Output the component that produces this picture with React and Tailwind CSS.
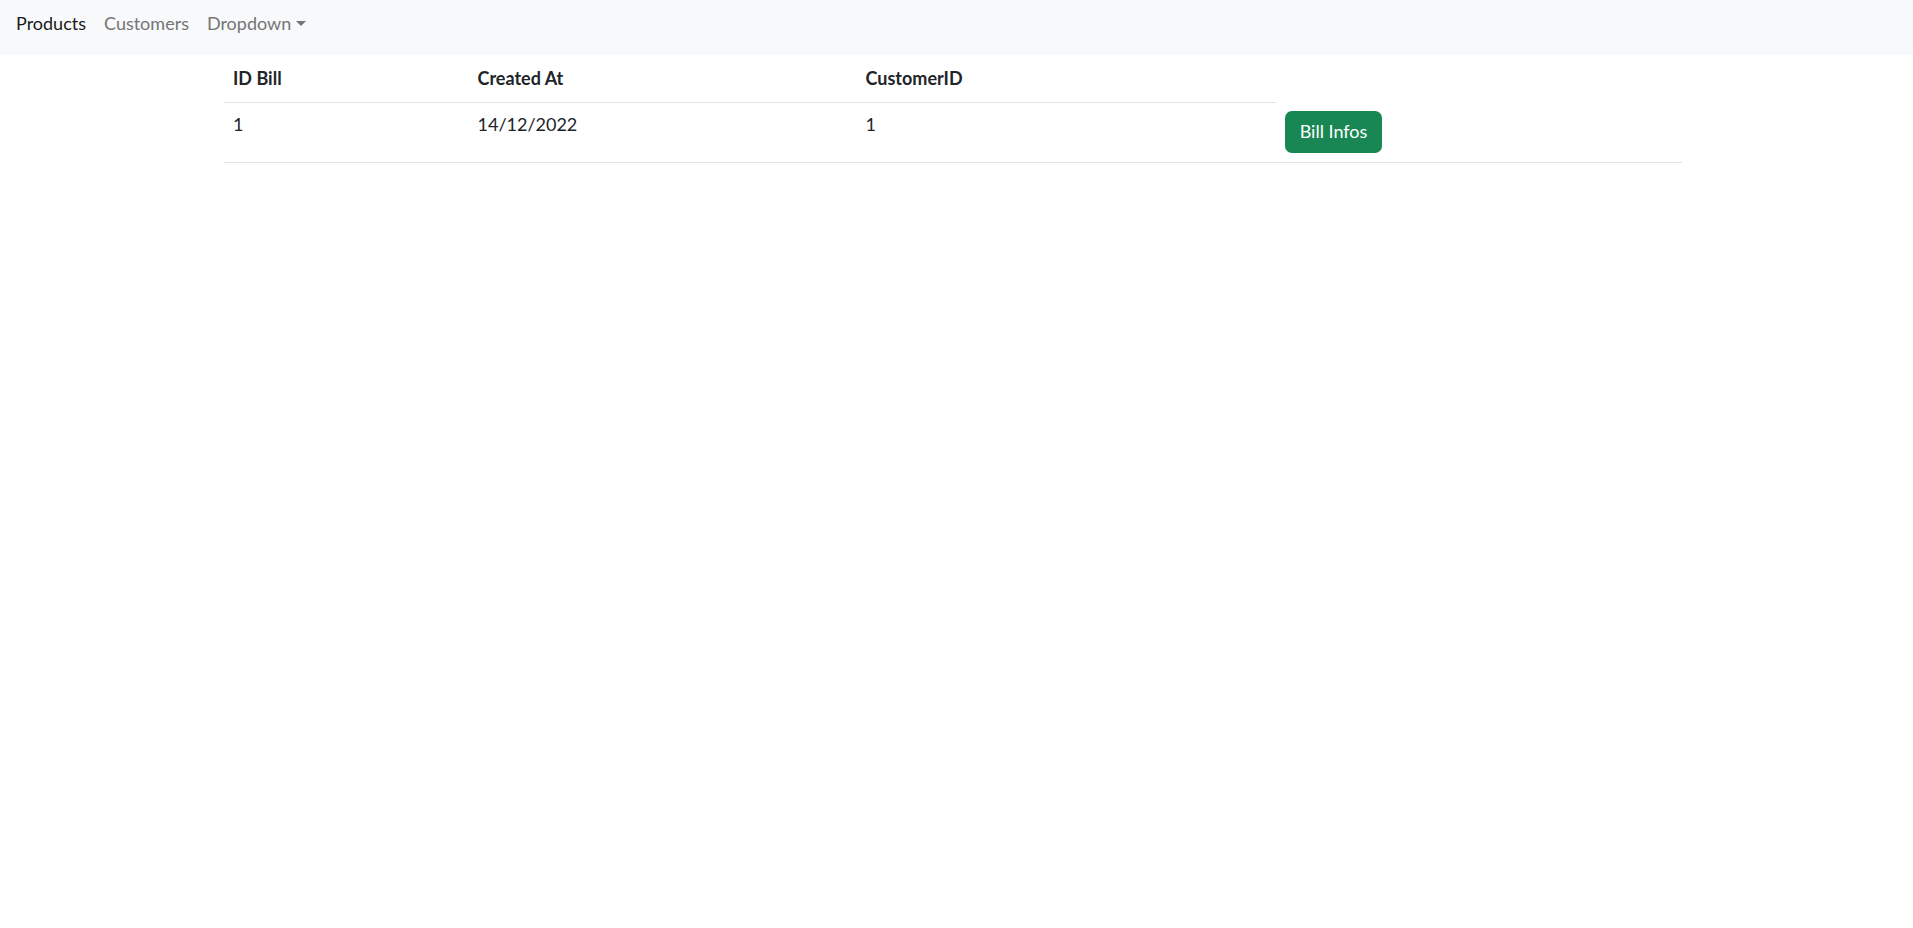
import React from "react";

const bills = [
    { id: 1, createdAt: "14/12/2022", customerId: 1 },
];

const NavBar = () => {
    return (
        <nav className="h-[55px] bg-[#f8f9fa] flex flex-row items-start pl-[7px] pt-[9px]">
            <a className="px-[9px] text-[#1a1a1a] leading-[29px]">Products</a>
            <a className="px-[9px] text-[#757575] leading-[29px]">Customers</a>
            <a className="px-[9px] text-[#757575] leading-[29px] flex flex-row items-center">
                Dropdown
                <span className="ml-[5px] w-0 h-0 border-l-[5px] border-r-[5px] border-t-[5px] border-l-transparent border-r-transparent border-t-[#757575]"></span>
            </a>
        </nav>
    );
};

const BillTable = () => {
    return (
        <div className="ml-[224px] w-[1458px]">
            <div className="grid grid-cols-[244.5px_388px_419.5px_406px]">
                <div className="col-span-3 grid grid-cols-[244.5px_388px_419.5px] border-b border-[#dee2e6] font-bold">
                    <div className="px-[9px] pt-[9px] pb-[8.5px] leading-[29px]">ID Bill</div>
                    <div className="px-[9px] pt-[9px] pb-[8.5px] leading-[29px]">Created At</div>
                    <div className="px-[9px] pt-[9px] pb-[8.5px] leading-[29px]">CustomerID</div>
                </div>
                <div></div>
            </div>
            {bills.map((bill) => (
                <div key={bill.id} className="grid grid-cols-[244.5px_388px_419.5px_406px] border-b border-[#dee2e6]">
                    <div className="px-[9px] pt-[7px] leading-[29px]">{bill.id}</div>
                    <div className="px-[9px] pt-[7px] leading-[29px]">{bill.createdAt}</div>
                    <div className="px-[9px] pt-[7px] leading-[29px]">{bill.customerId}</div>
                    <div className="px-[9px] pt-[8px] pb-[9px]">
                        <button className="h-[42px] w-[97px] rounded-[7px] bg-[#198754] text-white leading-[29px]">
                            Bill Infos
                        </button>
                    </div>
                </div>
            ))}
        </div>
    );
};

export default function App() {
    return (
        <div className="min-h-screen bg-white text-[#212529] text-[18px] font-['Lato',sans-serif]">
            <NavBar />
            <BillTable />
        </div>
    );
}
